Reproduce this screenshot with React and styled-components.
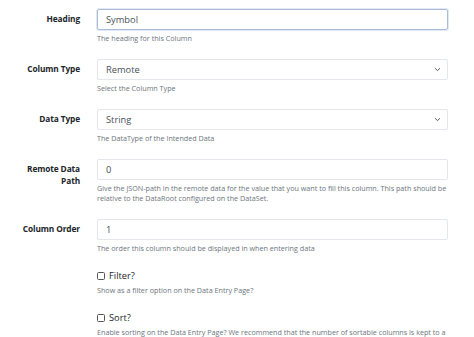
import React from 'react';
import styled, {createGlobalStyle} from 'styled-components';

const GlobalStyle = createGlobalStyle`
  body {
    margin: 0;
    background: #fff;
    font-family: "Open Sans", "Noto Sans", sans-serif;
    color: #212529;
  }
`

const fields = [
  {label: 'Heading', type: 'input', value: 'Symbol', focus: true, help: ['The heading for this Column']},
  {label: 'Column Type', type: 'select', value: 'Remote', help: ['Select the Column Type']},
  {label: 'Data Type', type: 'select', value: 'String', help: ['The DataType of the Intended Data']},
  {label: 'Remote Data Path', type: 'input', value: '0', help: [
    'Give the JSON-path in the remote data for the value that you want to fill this column. This path should be',
    'relative to the DataRoot configured on the DataSet.'
  ]},
  {label: 'Column Order', type: 'input', value: '1', help: ['The order this column should be displayed in when entering data']},
];

const checks = [
  {label: 'Filter?', help: 'Show as a filter option on the Data Entry Page?'},
  {label: 'Sort?', help: 'Enable sorting on the Data Entry Page? We recommend that the number of sortable columns is kept to a'},
];

function App() {
  return (
    <Form>
      <GlobalStyle />
      {fields.map((f) => (
        <Row key={f.label}>
          <Label>{f.label}</Label>
          <Field>
            <Control focus={f.focus}>
              <span>{f.value}</span>
              {f.type === 'select' && (
                <Chevron viewBox="0 0 10 6">
                  <path d="M1.5 1.2 L5 4.6 L8.5 1.2" />
                </Chevron>
              )}
            </Control>
            <Help>
              {f.help.map((h) => <div key={h}>{h}</div>)}
            </Help>
          </Field>
        </Row>
      ))}
      {checks.map((c) => (
        <Row key={c.label}>
          <span />
          <Field>
            <CheckLabel>
              <Box />
              {c.label}
            </CheckLabel>
            <Help>{c.help}</Help>
          </Field>
        </Row>
      ))}
    </Form>
  )
}

export default App

const Form = styled.div`
  padding-top: 9px;
  width: 474px;
  height: 337px;
  overflow: hidden;
`

const Row = styled.div`
  display: grid;
  grid-template-columns: 80px 351px;
  column-gap: 17px;
  margin-bottom: 16px;
`

const Label = styled.div`
  justify-self: end;
  width: 58px;
  text-align: right;
  font-weight: 700;
  font-size: 8.3px;
  letter-spacing: -0.1px;
  line-height: 12px;
  padding-top: 4px;
  color: #212529;
`

const Field = styled.div`
  display: flex;
  flex-direction: column;
`

const Control = styled.div`
  box-sizing: border-box;
  height: 21px;
  display: flex;
  align-items: center;
  justify-content: space-between;
  padding: 0 6px 0 8px;
  font-size: 9.3px;
  color: #495057;
  border: 1px solid ${p => p.focus ? '#a9bcd8' : '#e3e6ea'};
  border-radius: 2px;
  box-shadow: ${p => p.focus ? '0 0 0 1px rgba(170,190,220,0.35)' : 'none'};
`

const Chevron = styled.svg`
  width: 7px;
  height: 5px;
  fill: none;
  stroke: #555;
  stroke-width: 1.4;
`

const Help = styled.div`
  margin-top: 3px;
  font-size: 7.2px;
  line-height: 10px;
  color: #6c757d;
  white-space: nowrap;
`

const CheckLabel = styled.div`
  display: flex;
  align-items: center;
  gap: 4px;
  font-size: 9.3px;
  line-height: 13px;
  color: #212529;
`

const Box = styled.span`
  box-sizing: border-box;
  width: 8px;
  height: 8px;
  border: 1px solid #555;
  border-radius: 1.5px;
`
